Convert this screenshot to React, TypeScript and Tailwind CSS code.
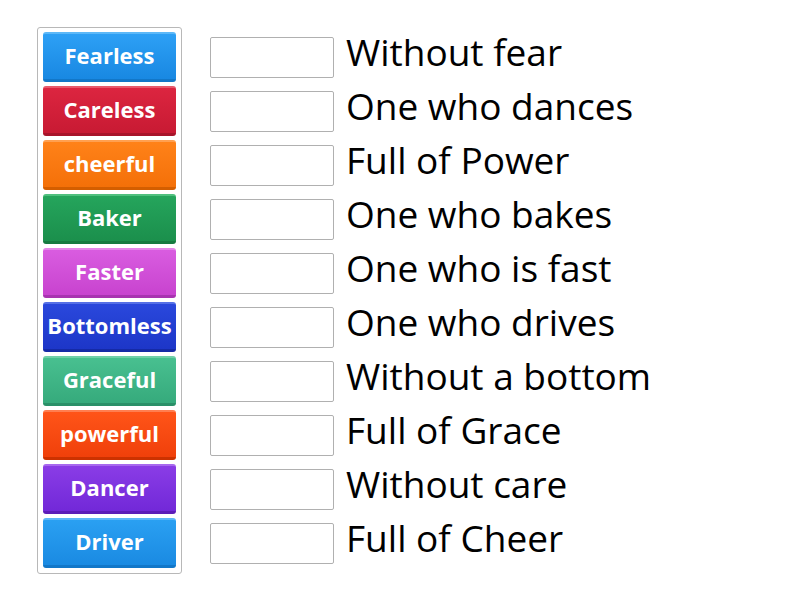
const words = [
  { label: 'Fearless', cls: 'from-[#2da0f5] to-[#1888e2] border-b-[#1277c8] border-t-[#5cb8f8]' },
  { label: 'Careless', cls: 'from-[#dc2540] to-[#c81a33] border-b-[#a8142a] border-t-[#e8596b]' },
  { label: 'cheerful', cls: 'from-[#ff8218] to-[#f47008] border-b-[#d45e00] border-t-[#ffa050]' },
  { label: 'Baker', cls: 'from-[#25a55c] to-[#1b8f4c] border-b-[#167a40] border-t-[#50c07e]' },
  { label: 'Faster', cls: 'from-[#d95ce0] to-[#c843cf] border-b-[#a833b0] border-t-[#e486ea]' },
  { label: 'Bottomless', cls: 'from-[#2a48dc] to-[#1d36c8] border-b-[#152aa6] border-t-[#5570e6]' },
  { label: 'Graceful', cls: 'from-[#48c090] to-[#36aa7c] border-b-[#2a9068] border-t-[#70d0a8]' },
  { label: 'powerful', cls: 'from-[#ff5418] to-[#f0400a] border-b-[#cc3200] border-t-[#ff7e50]' },
  { label: 'Dancer', cls: 'from-[#8a3ce6] to-[#7228d8] border-b-[#5c1cb8] border-t-[#a868ee]' },
  { label: 'Driver', cls: 'from-[#2aa0f2] to-[#1a8ae2] border-b-[#1277c8] border-t-[#5cb8f8]' },
]

const meanings = [
  'Without fear',
  'One who dances',
  'Full of Power',
  'One who bakes',
  'One who is fast',
  'One who drives',
  'Without a bottom',
  'Full of Grace',
  'Without care',
  'Full of Cheer',
]

export default function App() {
  return (
    <div className="w-[800px] h-[600px] bg-white flex items-start" style={{ fontFamily: '"Open Sans", sans-serif' }}>
      {/* Word tiles */}
      <div className="ml-[37px] mt-[27px] border border-[#b8b8b8] rounded-[3px] px-[5px] pt-[4px] pb-[5px] flex flex-col gap-1">
        {words.map(w => (
          <div
            key={w.label}
            className={`w-[133px] h-[50px] rounded-[3px] bg-gradient-to-b border-t-2 border-b-[3px] pb-[3px] flex items-center justify-center text-white font-bold text-[22px] leading-none ${w.cls}`}
          >
            {w.label}
          </div>
        ))}
      </div>

      {/* Answer slots */}
      <div className="ml-[28px] mt-[32px] flex flex-col gap-1">
        {meanings.map(m => (
          <div key={m} className="h-[50px] flex items-center gap-3">
            <div className="w-[124px] h-[41px] border border-[#b0b0b0] rounded-[2px] bg-white" />
            <span className="text-[37px] text-black leading-none pb-[11px]">{m}</span>
          </div>
        ))}
      </div>
    </div>
  )
}
